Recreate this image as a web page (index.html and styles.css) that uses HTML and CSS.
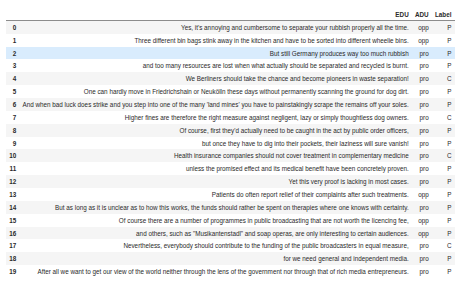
FILE: index.html
```html
<!DOCTYPE html>
<html lang="en">
<head>
<meta charset="utf-8">
<title>DataFrame</title>
<link rel="stylesheet" href="styles.css">
</head>
<body>
<table class="dataframe">
  <thead>
    <tr>
      <th class="blank"></th>
      <th>EDU</th>
      <th>ADU</th>
      <th>Label</th>
    </tr>
  </thead>
  <tbody>
    <tr><th>0</th><td>Yes, it's annoying and cumbersome to separate your rubbish properly all the time.</td><td>opp</td><td>P</td></tr>
    <tr><th>1</th><td>Three different bin bags stink away in the kitchen and have to be sorted into different wheelie bins.</td><td>opp</td><td>P</td></tr>
    <tr class="hover"><th>2</th><td>But still Germany produces way too much rubbish</td><td>pro</td><td>P</td></tr>
    <tr><th>3</th><td>and too many resources are lost when what actually should be separated and recycled is burnt.</td><td>pro</td><td>P</td></tr>
    <tr><th>4</th><td>We Berliners should take the chance and become pioneers in waste separation!</td><td>pro</td><td>C</td></tr>
    <tr><th>5</th><td>One can hardly move in Friedrichshain or Neukölln these days without permanently scanning the ground for dog dirt.</td><td>pro</td><td>P</td></tr>
    <tr><th>6</th><td>And when bad luck does strike and you step into one of the many 'land mines' you have to painstakingly scrape the remains off your soles.</td><td>pro</td><td>P</td></tr>
    <tr><th>7</th><td>Higher fines are therefore the right measure against negligent, lazy or simply thoughtless dog owners.</td><td>pro</td><td>C</td></tr>
    <tr><th>8</th><td>Of course, first they'd actually need to be caught in the act by public order officers,</td><td>pro</td><td>P</td></tr>
    <tr><th>9</th><td>but once they have to dig into their pockets, their laziness will sure vanish!</td><td>pro</td><td>P</td></tr>
    <tr><th>10</th><td>Health insurance companies should not cover treatment in complementary medicine</td><td>pro</td><td>C</td></tr>
    <tr><th>11</th><td>unless the promised effect and its medical benefit have been concretely proven.</td><td>pro</td><td>P</td></tr>
    <tr><th>12</th><td>Yet this very proof is lacking in most cases.</td><td>pro</td><td>P</td></tr>
    <tr><th>13</th><td>Patients do often report relief of their complaints after such treatments.</td><td>opp</td><td>P</td></tr>
    <tr><th>14</th><td>But as long as it is unclear as to how this works, the funds should rather be spent on therapies where one knows with certainty.</td><td>pro</td><td>P</td></tr>
    <tr><th>15</th><td>Of course there are a number of programmes in public broadcasting that are not worth the licencing fee,</td><td>opp</td><td>P</td></tr>
    <tr><th>16</th><td>and others, such as "Musikantenstadl" and soap operas, are only interesting to certain audiences.</td><td>opp</td><td>P</td></tr>
    <tr><th>17</th><td>Nevertheless, everybody should contribute to the funding of the public broadcasters in equal measure,</td><td>pro</td><td>C</td></tr>
    <tr><th>18</th><td>for we need general and independent media.</td><td>pro</td><td>P</td></tr>
    <tr><th>19</th><td>After all we want to get our view of the world neither through the lens of the government nor through that of rich media entrepreneurs.</td><td>pro</td><td>P</td></tr>
  </tbody>
</table>
</body>
</html>
```
FILE: styles.css
```css
html, body {
  margin: 0;
  padding: 0;
  background: #ffffff;
}

body {
  font-family: "Liberation Sans", Arial, sans-serif;
  font-size: 6.32px;
  color: #2a2a2a;
}

.dataframe {
  margin: 7px 0 0 6px;
  border: none;
  border-collapse: collapse;
  border-spacing: 0;
}

.dataframe thead {
  border-bottom: 1px solid #8c8c8c;
}

.dataframe th,
.dataframe td {
  text-align: right;
  white-space: nowrap;
  line-height: normal;
  padding: 0 3.16px;
  height: 12.87px;
  vertical-align: middle;
}

.dataframe th {
  font-weight: bold;
}

.dataframe thead th {
  vertical-align: bottom;
  height: 10.87px;
  padding-bottom: 2px;
}

.dataframe tbody tr:nth-child(odd) {
  background: #f5f5f5;
}

.dataframe tbody tr.hover {
  background: #d9ecfd;
}
```
